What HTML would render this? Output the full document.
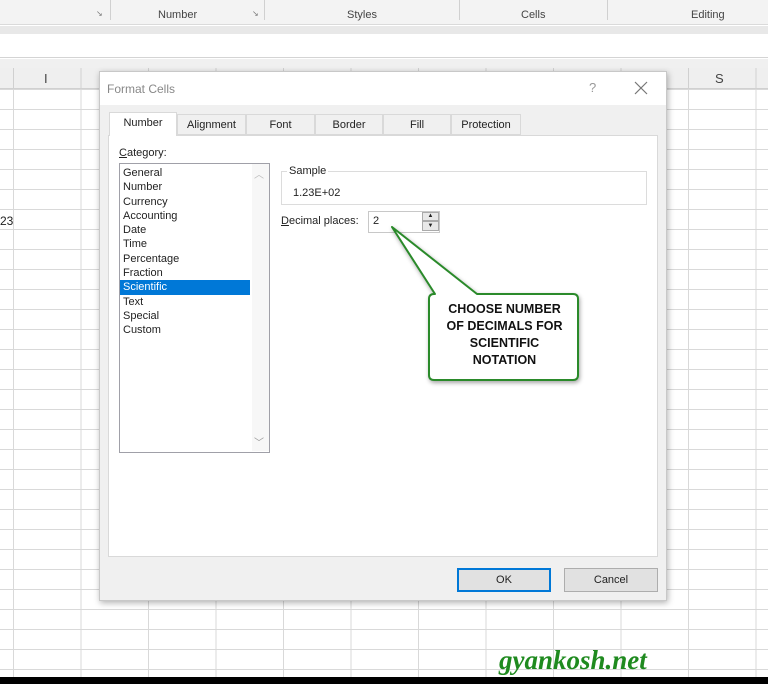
<!DOCTYPE html>
<html><head><style>
*{margin:0;padding:0;box-sizing:border-box}
body{width:768px;height:684px;overflow:hidden;position:relative;background:#fff;font-family:"Liberation Sans",sans-serif;font-size:11px;color:#222}
.abs{position:absolute}
.grid{left:0;top:68px;width:768px;height:616px;
background-image:linear-gradient(to right,#d9d9d9 1px,transparent 1px),linear-gradient(to bottom,#d9d9d9 1px,transparent 1px);
background-size:67.5px 20px,67.5px 20px;background-position:13px 0,0 1px}
.lst div{height:14.3px;line-height:14.3px;padding-left:3px}
.tab{position:absolute;top:114px;height:21px;border:1px solid #d9d9d9;background:#f0f0f0;text-align:center;line-height:20px;font-size:11px}
.btn{position:absolute;top:568px;height:24px;width:94px;background:#e1e1e1;border:1px solid #adadad;text-align:center;line-height:22px;font-size:11px}
</style></head><body>
<div class="abs" style="left:0;top:0;width:768px;height:25px;background:#f3f3f3;border-bottom:1px solid #dadada"></div>
<div class="abs" style="left:110px;top:0;width:1px;height:20px;background:#d0d0d0"></div>
<div class="abs" style="left:264px;top:0;width:1px;height:20px;background:#d0d0d0"></div>
<div class="abs" style="left:459px;top:0;width:1px;height:20px;background:#d0d0d0"></div>
<div class="abs" style="left:607px;top:0;width:1px;height:20px;background:#d0d0d0"></div>
<div class="abs" style="left:158px;top:9px;font-size:11px;color:#444">Number</div>
<div class="abs" style="left:347px;top:9px;font-size:11px;color:#444">Styles</div>
<div class="abs" style="left:521px;top:9px;font-size:11px;color:#444">Cells</div>
<div class="abs" style="left:691px;top:9px;font-size:11px;color:#444">Editing</div>
<div class="abs" style="left:96px;top:9px;font-size:8px;color:#777">↘</div>
<div class="abs" style="left:252px;top:9px;font-size:8px;color:#777">↘</div>
<div class="abs" style="left:0;top:26px;width:768px;height:8px;background:#e8e8e8"></div>
<div class="abs" style="left:0;top:34px;width:768px;height:24px;background:#fff;border-bottom:1px solid #d4d4d4"></div>
<div class="abs" style="left:0;top:59px;width:768px;height:9px;background:#f0f0f0"></div>
<div class="grid abs"></div>
<div class="abs" style="left:0;top:68px;width:768px;height:21px;background:#efefef;border-bottom:1px solid #d0d0d0;
background-image:linear-gradient(to right,#d0d0d0 1px,transparent 1px);background-size:67.5px 21px;background-position:13px 0"></div>
<div class="abs" style="left:44px;top:71px;font-size:13px;color:#444">I</div>
<div class="abs" style="left:715px;top:71px;font-size:13px;color:#444">S</div>
<div class="abs" style="left:0;top:214px;font-size:12px">23</div>
<div class="abs" style="left:0;top:677px;width:768px;height:7px;background:#000"></div>
<div class="abs" style="left:499px;top:645px;font-family:'Liberation Serif',serif;font-style:italic;font-weight:bold;font-size:27px;color:#1f8a1f">gyankosh.net</div>

<div class="abs" style="left:99px;top:71px;width:568px;height:530px;background:#f0f0f0;border:1px solid #c8c8c8;box-shadow:1px 2px 6px rgba(0,0,0,.3)"></div>
<div class="abs" style="left:100px;top:72px;width:566px;height:33px;background:#fff"></div>
<div class="abs" style="left:107px;top:82px;font-size:12px;color:#888">Format Cells</div>
<div class="abs" style="left:589px;top:80px;font-size:13px;color:#999">?</div>
<svg class="abs" style="left:634px;top:81px" width="14" height="14"><path d="M1 1 L13 13 M13 1 L1 13" stroke="#777" stroke-width="1.2"/></svg>
<div class="abs" style="left:108px;top:135px;width:550px;height:422px;background:#fff;border:1px solid #d9d9d9"></div>
<div class="tab" style="left:109px;top:112px;width:68px;height:24px;background:#fff;border-bottom:none">Number</div>
<div class="tab" style="left:177px;width:69px">Alignment</div>
<div class="tab" style="left:246px;width:69px">Font</div>
<div class="tab" style="left:315px;width:68px">Border</div>
<div class="tab" style="left:383px;width:68px">Fill</div>
<div class="tab" style="left:451px;width:70px">Protection</div>
<div class="abs" style="left:119px;top:147px"><u>C</u>ategory:</div>
<div class="abs lst" style="left:119px;top:163px;width:151px;height:290px;border:1px solid #a0a0a8;padding-top:2px">
<div>General</div><div>Number</div><div>Currency</div><div>Accounting</div><div>Date</div><div>Time</div><div>Percentage</div><div>Fraction</div><div style="background:#0078d7;color:#fff;width:130px">Scientific</div><div>Text</div><div>Special</div><div>Custom</div>
</div>
<div class="abs" style="left:252px;top:164px;width:17px;height:287px;background:#f7f7f7"></div>
<div class="abs" style="left:254px;top:166px;color:#bbb;font-size:10px">︿</div>
<div class="abs" style="left:254px;top:434px;color:#999;font-size:10px">﹀</div>
<div class="abs" style="left:281px;top:171px;width:366px;height:34px;border:1px solid #dcdcdc"></div>
<div class="abs" style="left:287px;top:165px;background:#fff;padding:0 2px">Sample</div>
<div class="abs" style="left:293px;top:187px">1.23E+02</div>
<div class="abs" style="left:281px;top:215px"><u>D</u>ecimal places:</div>
<div class="abs" style="left:368px;top:211px;width:72px;height:22px;border:1px solid #c8c8c8;background:#fff"></div>
<div class="abs" style="left:373px;top:215px">2</div>
<div class="abs" style="left:422px;top:212px;width:17px;height:9px;background:#e8e8e8;border:1px solid #aaa;font-size:6px;text-align:center;line-height:7px">▲</div>
<div class="abs" style="left:422px;top:221px;width:17px;height:10px;background:#e8e8e8;border:1px solid #aaa;font-size:6px;text-align:center;line-height:8px">▼</div>
<svg class="abs" style="left:380px;top:220px" width="210" height="170">
<path d="M55 74 L12 7 L97 74 H193 Q198 74 198 79 V155 Q198 160 193 160 H54 Q49 160 49 155 V79 Q49 74 54 74 Z" fill="#fff" stroke="#2a8a2a" stroke-width="2" stroke-linejoin="round" style="filter:drop-shadow(1px 2px 2px rgba(0,0,0,.35))"/>
</svg>
<div class="abs" style="left:430px;top:301px;width:149px;text-align:center;font-weight:bold;font-size:12.5px;line-height:17px;color:#111">CHOOSE NUMBER<br>OF DECIMALS FOR<br>SCIENTIFIC<br>NOTATION</div>
<div class="btn" style="left:457px;border:2px solid #0078d7;line-height:20px">OK</div>
<div class="btn" style="left:564px">Cancel</div>
</body></html>
